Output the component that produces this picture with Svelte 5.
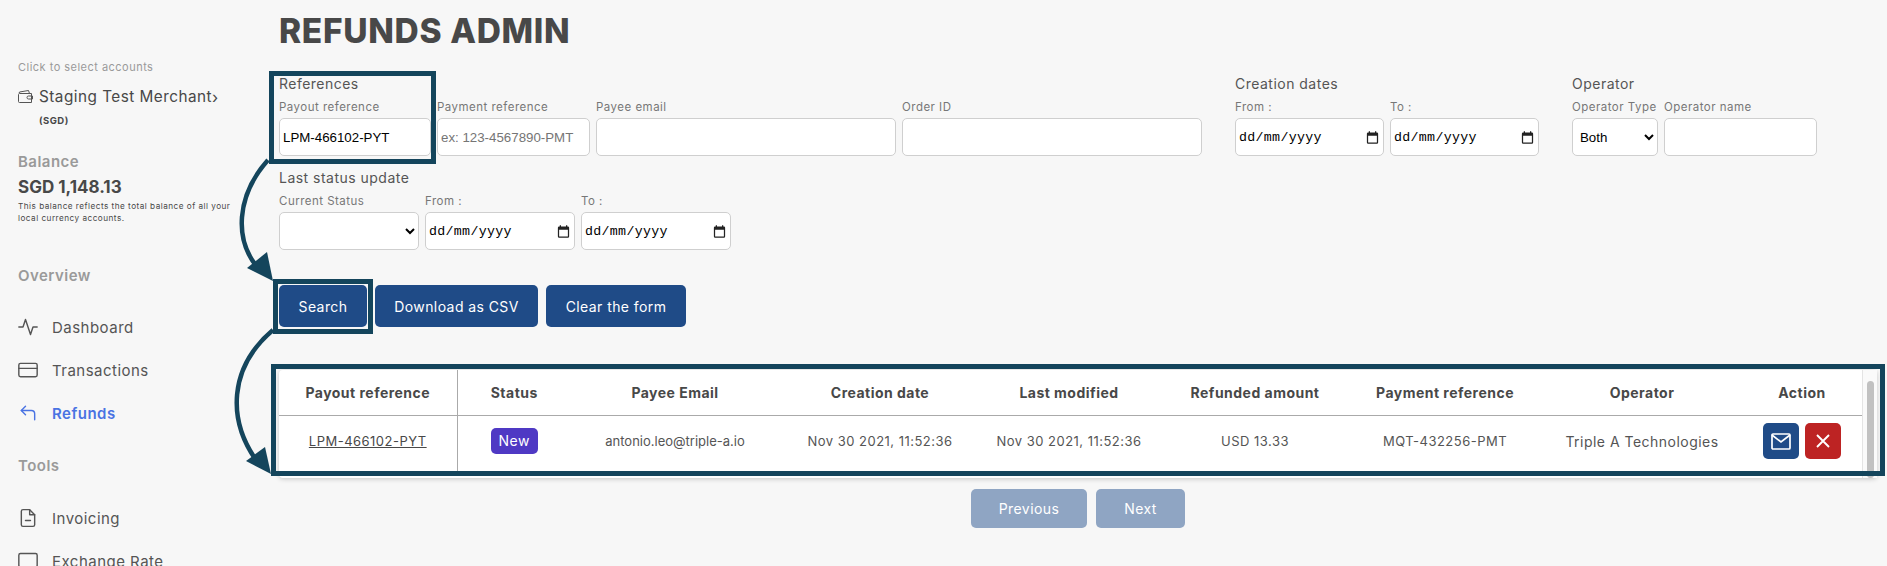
<script>
  const refFields = [
    { label: 'Payout reference', width: 152, value: 'LPM-466102-PYT' },
    { label: 'Payment reference', width: 153, placeholder: 'ex: 123-4567890-PMT' },
    { label: 'Payee email', width: 300 },
    { label: 'Order ID', width: 300 }
  ];

  const columns = [
    { title: 'Payout reference', width: 178 },
    { title: 'Status', width: 114 },
    { title: 'Payee Email', width: 208 },
    { title: 'Creation date', width: 202 },
    { title: 'Last modified', width: 176 },
    { title: 'Refunded amount', width: 196 },
    { title: 'Payment reference', width: 184 },
    { title: 'Operator', width: 210 },
    { title: 'Action', width: 115 }
  ];
</script>

<div class="page">
  <aside class="sidebar">
    <p class="hint">Click to select accounts</p>
    <div class="account">
      <svg width="15" height="13" viewBox="0 0 15 13" fill="none" stroke="#555" stroke-width="1">
        <path d="M1.5 3.5h12v9h-12a1 1 0 0 1-1-1v-7zM1 3.5l.5-1.5 9-1.5 1 3" />
        <path d="M14.5 6h-4a1.500 1.500 0 0 0 0 3h4z" />
      </svg>
      <span>Staging Test Merchant</span><span class="chev">›</span>
    </div>
    <p class="currency">(SGD)</p>

    <h4 class="balance-title">Balance</h4>
    <p class="balance">SGD 1,148.13</p>
    <p class="balance-note">This balance reflects the total balance of all your local currency accounts.</p>

    <h4 class="section first">Overview</h4>
    <nav>
      <a href="#dash">
        <svg viewBox="0 0 24 24"><polyline points="23 12 18 12 15 21 9 3 6 12 1 12" /></svg>
        Dashboard
      </a>
      <a href="#tx">
        <svg viewBox="0 0 24 24"><rect x="1" y="4" width="22" height="16" rx="2" /><line x1="1" y1="10" x2="23" y2="10" /></svg>
        Transactions
      </a>
      <a href="#refunds" class="active">
        <svg viewBox="0 0 24 24"><polyline points="9 14 4 9 9 4" /><path d="M20 20v-7a4 4 0 0 0-4-4H4" /></svg>
        Refunds
      </a>
    </nav>

    <h4 class="section tools-title">Tools</h4>
    <nav class="tools">
      <a href="#inv">
        <svg viewBox="0 0 24 24"><path d="M14 2H6a2 2 0 0 0-2 2v16a2 2 0 0 0 2 2h12a2 2 0 0 0 2-2V8z" /><polyline points="14 2 14 8 20 8" /><line x1="9" y1="15" x2="15" y2="15" /></svg>
        Invoicing
      </a>
      <a href="#fx">
        <svg viewBox="0 0 24 24"><rect x="1" y="3" width="22" height="16" rx="2" /><line x1="12" y1="19" x2="12" y2="23" /></svg>
        Exchange Rate
      </a>
    </nav>
  </aside>

  <main>
    <h1>REFUNDS ADMIN</h1>

    <div class="filters">
      <section class="group">
        <h5>References</h5>
        <div class="fields">
          {#each refFields as f}
            <label>
              <span>{f.label}</span>
              <input style="width:{f.width}px" value={f.value ?? ''} placeholder={f.placeholder ?? ''} />
            </label>
          {/each}
        </div>
      </section>

      <section class="group dates">
        <h5>Creation dates</h5>
        <div class="fields">
          {#each ['From :', 'To :'] as l}
            <label>
              <span>{l}</span>
              <div class="date w149">
                dd/mm/yyyy
                <svg viewBox="0 0 24 24"><path d="M19 4h-1V2h-2v2H8V2H6v2H5a2 2 0 0 0-2 2v14a2 2 0 0 0 2 2h14a2 2 0 0 0 2-2V6a2 2 0 0 0-2-2zm0 16H5V9h14z" /></svg>
              </div>
            </label>
          {/each}
        </div>
      </section>

      <section class="group ops">
        <h5>Operator</h5>
        <div class="fields">
          <label>
            <span>Operator Type</span>
            <select class="op-type"><option>Both</option></select>
          </label>
          <label>
            <span>Operator name</span>
            <input style="width:153px" />
          </label>
        </div>
      </section>
    </div>

    <section class="group status">
      <h5>Last status update</h5>
      <div class="fields">
        <label>
          <span>Current Status</span>
          <select class="status-select"><option></option></select>
        </label>
        {#each ['From :', 'To :'] as l}
          <label>
            <span>{l}</span>
            <div class="date w150">
              dd/mm/yyyy
              <svg viewBox="0 0 24 24"><path d="M19 4h-1V2h-2v2H8V2H6v2H5a2 2 0 0 0-2 2v14a2 2 0 0 0 2 2h14a2 2 0 0 0 2-2V6a2 2 0 0 0-2-2zm0 16H5V9h14z" /></svg>
            </div>
          </label>
        {/each}
      </div>
    </section>

    <div class="actions">
      <button class="btn search">Search</button>
      <button class="btn csv">Download as CSV</button>
      <button class="btn clear">Clear the form</button>
    </div>

    <div class="card">
      <table>
        <colgroup>
          {#each columns as c}
            <col style="width:{c.width}px" />
          {/each}
        </colgroup>
        <thead>
          <tr>
            {#each columns as c}
              <th>{c.title}</th>
            {/each}
          </tr>
        </thead>
        <tbody>
          <tr>
            <td><a href="#payout">LPM-466102-PYT</a></td>
            <td><span class="badge">New</span></td>
            <td class="email">antonio.leo@triple-a.io</td>
            <td>Nov 30 2021, 11:52:36</td>
            <td>Nov 30 2021, 11:52:36</td>
            <td>USD 13.33</td>
            <td>MQT-432256-PMT</td>
            <td class="operator">Triple A Technologies</td>
            <td class="row-actions">
              <button class="icon-btn mail" aria-label="Send email">
                <svg width="20" height="17" viewBox="0 0 20 17" fill="none" stroke="#fff" stroke-width="1.7">
                  <rect x="1" y="1" width="18" height="15" rx="1" />
                  <path d="M1 2l9 7 9-7" />
                </svg>
              </button>
              <button class="icon-btn del" aria-label="Cancel refund">
                <svg width="16" height="16" viewBox="0 0 16 16" fill="none" stroke="#fff" stroke-width="1.9">
                  <path d="M2 2l12 12M14 2L2 14" />
                </svg>
              </button>
            </td>
          </tr>
        </tbody>
      </table>
      <div class="scrollbar"><div class="thumb"></div></div>
    </div>

    <div class="pager">
      <button class="btn faded prev">Previous</button>
      <button class="btn faded next">Next</button>
    </div>
  </main>

  <!-- annotation layer drawn on top of the screenshot -->
  <svg class="annotations" width="1887" height="566" fill="none" stroke="#14455c" stroke-width="5">
    <rect x="271.500" y="73.500" width="162" height="88" />
    <rect x="275.500" y="281.500" width="95" height="50" />
    <rect x="273.500" y="366.500" width="1609" height="107" />
    <path stroke-width="4.500" d="M268 160C236 196 234 240 258 268" />
    <path stroke-width="4.500" d="M273 330C228 368 228 420 256 460" />
    <path d="M273 281L247 268L267 252Z" fill="#14455c" stroke="none" />
    <path d="M271 474L246 461L265 447Z" fill="#14455c" stroke="none" />
  </svg>
</div>

<style>
  :global(body) {
    margin: 0;
    background: #f7f7f7;
  }
  .page {
    position: relative;
    display: flex;
    width: 1887px;
    height: 566px;
    overflow: hidden;
    background: #f7f7f7;
    font-family: Inter, "Liberation Sans", sans-serif;
    color: #484848;
    letter-spacing: 0.03em;
  }
  .sidebar {
    width: 261px;
    flex: none;
    padding: 60px 0 0 18px;
  }
  .hint {
    margin: 0;
    font-size: 11px;
    line-height: 14px;
    color: #9a9a9a;
  }
  .account {
    display: flex;
    align-items: center;
    margin-top: 14px;
    font-size: 15.300px;
    line-height: 18px;
    white-space: nowrap;
  }
  .account svg {
    margin-right: 6px;
    margin-top: -2px;
  }
  .chev {
    font-size: 16px;
  }
  .currency {
    margin: 9px 0 0 21px;
    font-size: 9.500px;
    line-height: 12px;
    font-weight: 700;
  }
  .balance-title {
    margin: 26px 0 0;
    font-size: 15px;
    line-height: 18px;
    font-weight: 600;
    color: #9a9a9a;
  }
  .balance {
    margin: 6px 0 0;
    font-size: 17px;
    line-height: 20px;
    font-weight: 700;
    letter-spacing: 0;
  }
  .balance-note {
    margin: 3px 0 0;
    width: 225px;
    font-size: 8.200px;
    line-height: 12px;
  }
  .section {
    margin: 26px 0 0;
    font-size: 15px;
    line-height: 18px;
    font-weight: 600;
    color: #9a9a9a;
  }
  .section.first {
    margin-top: 43px;
  }
  .section.tools-title {
    margin-top: 35px;
  }
  nav {
    display: flex;
    flex-direction: column;
    gap: 25px;
    margin-top: 33px;
  }
  nav.tools {
    margin-top: 34px;
  }
  nav a {
    display: flex;
    align-items: center;
    gap: 14px;
    height: 18px;
    font-size: 15px;
    color: #555;
    text-decoration: none;
    white-space: nowrap;
  }
  nav a svg {
    width: 20px;
    height: 20px;
    flex: none;
    fill: none;
    stroke: currentColor;
    stroke-width: 1.7;
    stroke-linecap: round;
    stroke-linejoin: round;
  }
  nav a.active {
    color: #4a73e3;
    font-weight: 600;
  }
  main {
    flex: 1;
    min-width: 0;
  }
  h1 {
    margin: 12px 0 0;
    font-size: 33.500px;
    line-height: 38px;
    font-weight: 800;
    letter-spacing: 0.02em;
    color: #484848;
  }
  .filters {
    display: flex;
    margin-top: 26px;
  }
  .group h5 {
    margin: 0;
    font-size: 14px;
    line-height: 16px;
    font-weight: 400;
    color: #555;
  }
  .fields {
    display: flex;
    gap: 6px;
    margin-top: 8px;
  }
  .dates {
    margin-left: 33px;
  }
  .ops {
    margin-left: 33px;
  }
  .status {
    margin-top: 14px;
  }
  label {
    display: flex;
    flex-direction: column;
    gap: 3px;
  }
  label span {
    font-size: 11.500px;
    line-height: 15px;
    color: #777;
    white-space: nowrap;
  }
  input,
  select,
  .date {
    box-sizing: border-box;
    height: 38px;
    border: 1px solid #cfcfcf;
    border-radius: 5px;
    background: #fff;
    font-family: "Liberation Sans", sans-serif;
    font-size: 13.300px;
    letter-spacing: 0;
    color: #000;
  }
  input {
    padding: 0 3px;
  }
  input::placeholder {
    color: #757575;
    opacity: 1;
  }
  .date {
    display: flex;
    align-items: center;
    justify-content: space-between;
    padding: 0 3px 0 3px;
    font-family: "Liberation Mono", monospace;
    font-size: 13.300px;
    letter-spacing: 0.3px;
  }
  .date svg {
    width: 15px;
    height: 15px;
    fill: #222;
  }
  .w149 {
    width: 149px;
  }
  .w150 {
    width: 150px;
  }
  .op-type {
    width: 86px;
    padding-left: 3px;
  }
  .status-select {
    width: 140px;
  }
  .actions {
    display: flex;
    gap: 8px;
    margin-top: 35px;
  }
  .btn {
    height: 42px;
    border: none;
    border-radius: 5px;
    background: #1f4b87;
    color: #fff;
    font-family: inherit;
    font-size: 14px;
    letter-spacing: 0.03em;
  }
  .search {
    width: 88px;
  }
  .csv {
    width: 163px;
  }
  .clear {
    width: 140px;
  }
  .card {
    display: flex;
    width: 1598px;
    height: 108px;
    margin-top: 43px;
    border-radius: 4px;
    background: #fff;
    box-shadow: 0 1px 5px rgba(0, 0, 0, 0.2);
  }
  table {
    width: 1583px;
    height: 102px;
    flex: none;
    table-layout: fixed;
    border-collapse: collapse;
    text-align: center;
  }
  th {
    height: 45px;
    padding: 0;
    border-bottom: 1px solid #aaa;
    font-size: 14px;
    font-weight: 700;
    color: #484848;
    white-space: nowrap;
  }
  td {
    height: 50px;
    padding: 0 0 6px;
    border-bottom: 1px solid #aaa;
    font-size: 13px;
    color: #555;
    white-space: nowrap;
  }
  th:first-child,
  td:first-child {
    border-right: 1px solid #aaa;
  }
  th:last-child {
    padding-right: 5px;
  }
  td.email {
    letter-spacing: 0;
  }
  td.operator {
    font-size: 14px;
  }
  td.row-actions {
    padding-right: 5px;
  }
  td a {
    color: #484848;
  }
  .badge {
    display: inline-block;
    width: 47px;
    height: 26px;
    border-radius: 5px;
    background: #4f39c4;
    color: #fff;
    font-size: 14px;
    line-height: 26px;
  }
  .icon-btn {
    display: inline-flex;
    align-items: center;
    justify-content: center;
    width: 36px;
    height: 36px;
    padding: 0;
    border: none;
    border-radius: 5px;
    vertical-align: middle;
  }
  .mail {
    background: #1f4b87;
  }
  .del {
    margin-left: 2px;
    background: #bd2323;
  }
  .scrollbar {
    flex: 1;
    padding: 11px 3px 0 4px;
    border-left: 1px solid #e4e4e4;
    background: #fafafa;
    overflow: hidden;
  }
  .thumb {
    height: 97px;
    border-radius: 4px;
    background: #c1c1c1;
  }
  .pager {
    display: flex;
    justify-content: center;
    gap: 9px;
    width: 1598px;
    margin-top: 11px;
  }
  .faded {
    height: 39px;
    background: #8fa5c3;
  }
  .prev {
    width: 116px;
  }
  .next {
    width: 89px;
  }
  .annotations {
    position: absolute;
    top: 0;
    left: 0;
    pointer-events: none;
  }
</style>
